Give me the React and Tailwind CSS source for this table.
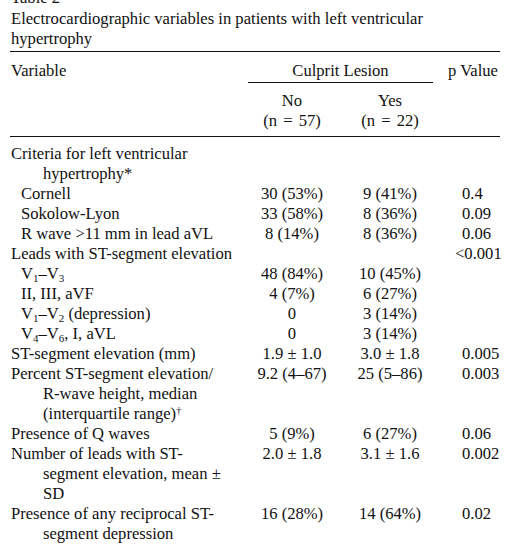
import React from "react";

const V = ({ a, b }) => (
  <>
    V<sub className="text-[11px]">{a}</sub>–V<sub className="text-[11px]">{b}</sub>
  </>
);

const rows = [
  { label: ["Criteria for left ventricular", "hypertrophy*"] },
  { label: ["Cornell"], sub: true, no: "30 (53%)", yes: "9 (41%)", p: "0.4" },
  { label: ["Sokolow-Lyon"], sub: true, no: "33 (58%)", yes: "8 (36%)", p: "0.09" },
  { label: ["R wave >11 mm in lead aVL"], sub: true, no: "8 (14%)", yes: "8 (36%)", p: "0.06" },
  { label: ["Leads with ST-segment elevation"], p: "<0.001" },
  { label: [<V a="1" b="3" />], sub: true, no: "48 (84%)", yes: "10 (45%)" },
  { label: ["II, III, aVF"], sub: true, no: "4 (7%)", yes: "6 (27%)" },
  { label: [<><V a="1" b="2" /> (depression)</>], sub: true, no: "0", yes: "3 (14%)" },
  { label: [<><V a="4" b="6" />, I, aVL</>], sub: true, no: "0", yes: "3 (14%)" },
  { label: ["ST-segment elevation (mm)"], no: "1.9 ± 1.0", yes: "3.0 ± 1.8", p: "0.005" },
  {
    label: [
      "Percent ST-segment elevation/",
      "R-wave height, median",
      <>
        (interquartile range)<sup className="text-[10px]">†</sup>
      </>,
    ],
    no: "9.2 (4–67)",
    yes: "25 (5–86)",
    p: "0.003",
  },
  { label: ["Presence of Q waves"], no: "5 (9%)", yes: "6 (27%)", p: "0.06" },
  {
    label: ["Number of leads with ST-", "segment elevation, mean ±", "SD"],
    no: "2.0 ± 1.8",
    yes: "3.1 ± 1.6",
    p: "0.002",
  },
  {
    label: ["Presence of any reciprocal ST-", "segment depression"],
    no: "16 (28%)",
    yes: "14 (64%)",
    p: "0.02",
  },
];

const Row = ({ row }) => (
  <>
    <div className={row.sub ? "pl-[11px]" : "pl-[1px]"}>
      {row.label.map((line, i) => (
        <div key={i} className={i > 0 ? "pl-[32px]" : ""}>
          {line}
        </div>
      ))}
    </div>
    <div className="text-center">{row.no}</div>
    <div className="text-center">{row.yes}</div>
    <div className={row.p && row.p.startsWith("<") ? "pl-[9px]" : "pl-[16px]"}>{row.p}</div>
  </>
);

const Count = ({ n }) => (
  <>
    (n <span className="mx-[2px]">=</span> {n})
  </>
);

const App = () => {
  return (
    <div className="w-[507px] h-[553px] overflow-hidden bg-white pl-[10px] pr-[7px] text-[16.6px] leading-[20px] text-[#111] font-['Liberation_Serif','Times_New_Roman',serif]">
      <div className="-mt-[12px] pl-[1px]">Table 2</div>
      <div className="mt-[1px] pl-[1px]">
        Electrocardiographic variables in patients with left ventricular
        <br />
        hypertrophy
      </div>

      <div className="mt-[2px] border-t border-[#111]" />

      <div className="grid grid-cols-[240px_84px_112px_1fr] pt-[9px]">
        <div className="pl-[1px]">Variable</div>
        <div className="col-span-2 -ml-[2px] mr-[13px]">
          <div className="text-center">Culprit Lesion</div>
          <div className="mt-[1px] border-t border-[#111]" />
        </div>
        <div className="-ml-[12px] pr-[2px] text-right whitespace-nowrap">p Value</div>

        <div className="mt-[8px]" />
        <div className="mt-[8px] text-center">No</div>
        <div className="mt-[8px] text-center">Yes</div>
        <div className="mt-[8px]" />

        <div />
        <div className="text-center">
          <Count n="57" />
        </div>
        <div className="text-center">
          <Count n="22" />
        </div>
        <div />
      </div>

      <div className="mt-[5px] border-t border-[#111]" />

      <div className="grid grid-cols-[240px_84px_112px_1fr] pt-[7px]">
        {rows.map((row, i) => (
          <Row key={i} row={row} />
        ))}
      </div>
    </div>
  );
};

export default App;
